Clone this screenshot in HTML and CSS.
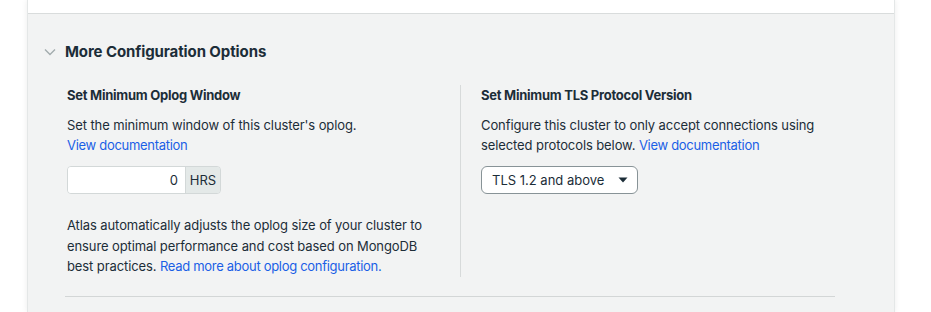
FILE: index.html
```html
<!DOCTYPE html>
<html lang="en">
<head>
<meta charset="utf-8">
<title>More Configuration Options</title>
<link rel="stylesheet" href="styles.css">
</head>
<body>
<div class="card">
  <div class="card-top"></div>
  <section class="section">
    <div class="section-header">
      <svg class="chevron" width="12" height="8" viewBox="0 0 12 8" aria-hidden="true"><path d="M1 1.5 L6 6.5 L11 1.5" fill="none" stroke="#a3acae" stroke-width="1.4"/></svg>
      <h2 class="section-title">More Configuration Options</h2>
    </div>
    <div class="columns">
      <div class="col col-left">
        <h3 class="field-title">Set Minimum Oplog Window</h3>
        <p class="text desc">Set the minimum window of this cluster's oplog.<br><a class="link" href="#">View documentation</a></p>
        <div class="input-group">
          <div class="input-box">0</div>
          <div class="input-addon">HRS</div>
        </div>
        <p class="text note">Atlas automatically adjusts the oplog size of your cluster to ensure optimal performance and cost based on MongoDB best practices. <a class="link" href="#">Read more about oplog configuration.</a></p>
      </div>
      <div class="col col-right">
        <h3 class="field-title">Set Minimum TLS Protocol Version</h3>
        <p class="text desc">Configure this cluster to only accept connections using selected protocols below. <a class="link" href="#">View documentation</a></p>
        <div class="select">
          <span class="select-value">TLS 1.2 and above</span>
          <svg class="caret" width="10" height="6" viewBox="0 0 10 6" aria-hidden="true"><path d="M0.5 0.5 H9.5 L5 5.5 Z" fill="#1c2d38"/></svg>
        </div>
      </div>
    </div>
    <div class="bottom-rule"></div>
  </section>
</div>
</body>
</html>
```

FILE: styles.css
```css
* { box-sizing: border-box; }
html, body { margin: 0; padding: 0; background: #ffffff; }
body {
  font-family: "Inter", "Lato", "Liberation Sans", sans-serif;
  color: #1c2d38;
  height: 312px;
  overflow: hidden;
}
.card {
  margin-left: 27px;
  width: 868px;
  height: 312px;
  border-left: 1px solid #e4e7e7;
  border-right: 1px solid #e4e7e7;
  box-shadow: 0 0 6px rgba(0,0,0,0.08);
  background: #f2f3f3;
}
.card-top {
  height: 14px;
  background: #ffffff;
  border-bottom: 1px solid #d9dcdc;
}
.section {
  padding: 28px 0 0 0;
}
.section-header {
  display: flex;
  align-items: center;
  height: 20px;
  padding-left: 16px;
}
.chevron { margin-right: 9px; }
.section-title {
  margin: 0;
  font-size: 15px;
  font-weight: 700;
  line-height: 20px;
  letter-spacing: -0.1px;
}
.columns {
  display: flex;
  margin-top: 23px;
  margin-left: 39px;
  width: 768px;
}
.col-left {
  width: 394px;
  border-right: 1px solid #d7dada;
}
.col-right {
  padding-left: 20px;
  flex: 1;
}
.field-title {
  margin: 0;
  font-size: 13px;
  font-weight: 700;
  line-height: 20px;
  letter-spacing: -0.25px;
}
.text {
  font-size: 13px;
  line-height: 20px;
  margin: 0;
  letter-spacing: -0.1px;
}
.desc { margin-top: 10px; }
.link { color: #1a5fe6; text-decoration: none; letter-spacing: -0.3px; }
.input-group {
  display: flex;
  margin-top: 11px;
  width: 154px;
  height: 28px;
  border: 1px solid #d3d8d8;
  border-radius: 4px;
  overflow: hidden;
}
.input-box {
  flex: 1;
  background: #ffffff;
  text-align: right;
  font-size: 13px;
  line-height: 26px;
  padding-right: 7px;
}
.input-addon {
  width: 35px;
  background: #e4e9e8;
  border-left: 1px solid #d3d8d8;
  font-size: 13px;
  line-height: 26px;
  text-align: center;
}
.note { margin-top: 21px; width: 372px; line-height: 20.5px; }
.select {
  margin-top: 11px;
  width: 157px;
  height: 28px;
  border: 1px solid #889397;
  border-radius: 6px;
  background: #ffffff;
  display: flex;
  align-items: center;
  justify-content: space-between;
  padding: 0 9px 0 10px;
  font-size: 13px;
}
.bottom-rule {
  margin: 19px 0 0 37px;
  width: 770px;
  height: 1px;
  background: #d3d6d6;
}
```
